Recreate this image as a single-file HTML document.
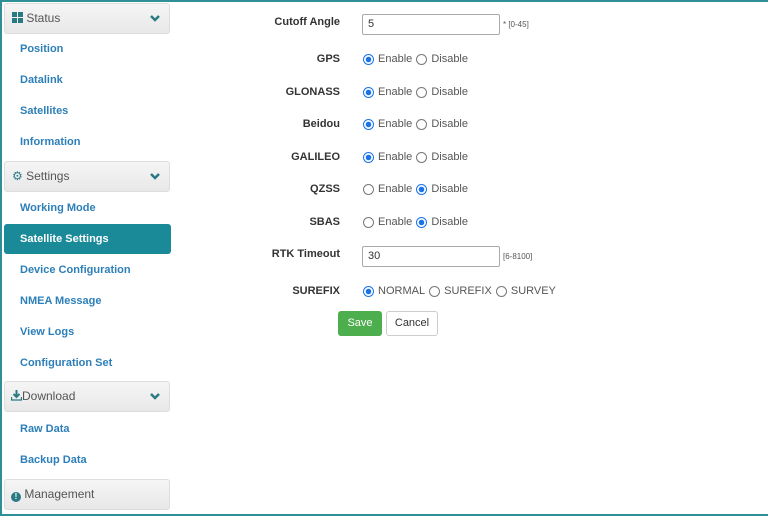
<!DOCTYPE html>
<html><head><style>
*{box-sizing:border-box;margin:0;padding:0}
body{width:768px;height:516px;background:#fff;font-family:"Liberation Sans",Arial,sans-serif;position:relative;overflow:hidden}
.bt{position:absolute;left:0;top:0;width:768px;height:2px;background:#2f8f96}
.bl{position:absolute;left:0;top:0;width:2px;height:516px;background:#2f8f96}
.bb{position:absolute;left:0;top:514px;width:768px;height:2px;background:#2f8f96}
.ph{position:absolute;left:4px;width:166px;height:31px;background:linear-gradient(#f5f5f5,#e8e8e8);border:1px solid #ddd;border-radius:3px;font-size:12px;color:#555;padding:0 0 0 7px;line-height:29px}
.ph svg.ch{position:absolute;right:9px;top:10px}
.it{position:absolute;left:20px;font-size:11px;font-weight:bold;color:#2c7fb8;transform:translateY(-50%)}
.act{position:absolute;left:4px;top:224px;width:167px;height:30px;background:#1b8a98;border-radius:3px;color:#fff;font-size:11px;font-weight:bold;line-height:30px;padding-left:16px}
.lb{position:absolute;right:428px;font-size:11px;font-weight:bold;color:#333;transform:translateY(-50%)}
.rw{position:absolute;left:362px;font-size:11px;color:#555;transform:translateY(-50%);display:flex;align-items:center;white-space:nowrap}
.r{width:11px;height:11px;border-radius:50%;border:1px solid #777;display:inline-block;margin-right:4px;margin-left:1px;background:#fff}
.r.on{border-color:#1a73e8;background:radial-gradient(circle,#1a73e8 0 2.5px,#fff 3px)}
.inp{position:absolute;left:362px;width:138px;height:21px;border:1px solid #aaa;border-radius:2px;font-size:11px;color:#333;padding-left:5px;line-height:19px}
.hint{position:absolute;left:503px;font-size:8px;color:#555}
</style></head><body>
<div class="bt"></div><div class="bl"></div><div class="bb"></div>
<div class="ph" style="top:3px"><svg width="11" height="11" style="vertical-align:-1px"><rect x="0" y="0" width="5" height="5" fill="#2a7a84"/><rect x="6" y="0" width="5" height="5" fill="#2a7a84"/><rect x="0" y="6" width="5" height="5" fill="#2a7a84"/><rect x="6" y="6" width="5" height="5" fill="#2a7a84"/></svg> Status<svg class="ch" width="10" height="8"><path d="M1 2 L5 6 L9 2" stroke="#2a7a84" stroke-width="2.5" fill="none"/></svg></div>
<div class="it" style="top:49px">Position</div>
<div class="it" style="top:80px">Datalink</div>
<div class="it" style="top:111px">Satellites</div>
<div class="it" style="top:142px">Information</div>
<div class="ph" style="top:161px"><span style="color:#2a7a84">&#9881;</span> Settings<svg class="ch" width="10" height="8"><path d="M1 2 L5 6 L9 2" stroke="#2a7a84" stroke-width="2.5" fill="none"/></svg></div>
<div class="it" style="top:208px">Working Mode</div>
<div class="act">Satellite Settings</div>
<div class="it" style="top:270px">Device Configuration</div>
<div class="it" style="top:301px">NMEA Message</div>
<div class="it" style="top:332px">View Logs</div>
<div class="it" style="top:363px">Configuration Set</div>
<div class="ph" style="top:381px;padding-left:6px"><svg width="11" height="11" style="vertical-align:-1px"><path d="M5.5 0 V7 M2.5 4 L5.5 7 L8.5 4" stroke="#2a7a84" stroke-width="2" fill="none"/><path d="M0.5 7 V10 H10.5 V7" stroke="#2a7a84" stroke-width="1.3" fill="none"/></svg>Download<svg class="ch" width="10" height="8"><path d="M1 2 L5 6 L9 2" stroke="#2a7a84" stroke-width="2.5" fill="none"/></svg></div>
<div class="it" style="top:429px">Raw Data</div>
<div class="it" style="top:460px">Backup Data</div>
<div class="ph" style="top:479px;padding-left:6px"><span style="display:inline-block;width:10px;height:10px;border-radius:50%;background:#2a7a84;color:#fff;font-size:8px;line-height:10px;text-align:center;font-weight:bold;vertical-align:-1px">!</span> Management</div>

<div class="lb" style="top:22px">Cutoff Angle</div>
<div class="inp" style="top:14px">5</div><div class="hint" style="top:20px">* [0-45]</div>
<div class="lb" style="top:59px">GPS</div>
<div class="rw" style="top:59px"><span class="r on"></span>Enable&nbsp;<span class="r"></span>Disable</div>
<div class="lb" style="top:92px">GLONASS</div>
<div class="rw" style="top:92px"><span class="r on"></span>Enable&nbsp;<span class="r"></span>Disable</div>
<div class="lb" style="top:124px">Beidou</div>
<div class="rw" style="top:124px"><span class="r on"></span>Enable&nbsp;<span class="r"></span>Disable</div>
<div class="lb" style="top:157px">GALILEO</div>
<div class="rw" style="top:157px"><span class="r on"></span>Enable&nbsp;<span class="r"></span>Disable</div>
<div class="lb" style="top:189px">QZSS</div>
<div class="rw" style="top:189px"><span class="r"></span>Enable&nbsp;<span class="r on"></span>Disable</div>
<div class="lb" style="top:222px">SBAS</div>
<div class="rw" style="top:222px"><span class="r"></span>Enable&nbsp;<span class="r on"></span>Disable</div>
<div class="lb" style="top:254px">RTK Timeout</div>
<div class="inp" style="top:246px">30</div><div class="hint" style="top:252px">[6-8100]</div>
<div class="lb" style="top:291px">SUREFIX</div>
<div class="rw" style="top:291px"><span class="r on"></span>NORMAL&nbsp;<span class="r"></span>SUREFIX&nbsp;<span class="r"></span>SURVEY</div>
<div style="position:absolute;left:338px;top:311px;width:44px;height:25px;background:#4cae4c;border-radius:3px;color:#fff;font-size:11px;text-align:center;line-height:25px">Save</div>
<div style="position:absolute;left:386px;top:311px;width:52px;height:25px;border:1px solid #ccc;border-radius:3px;color:#333;font-size:11px;text-align:center;line-height:23px">Cancel</div>
</body></html>
